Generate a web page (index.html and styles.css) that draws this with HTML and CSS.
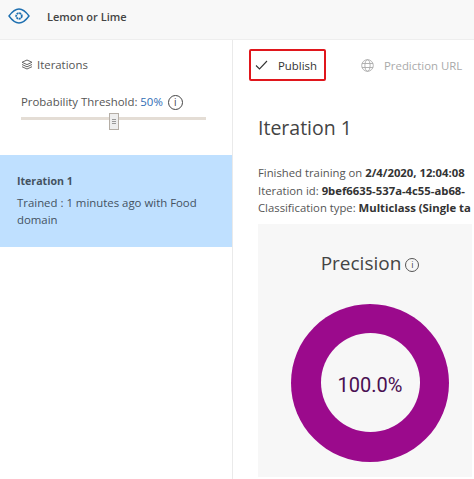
FILE: index.html
```html
<!DOCTYPE html>
<html lang="en">

<head>
    <meta charset="UTF-8">
    <meta name="viewport" content="width=device-width, initial-scale=1.0">
    <title>Lemon or Lime</title>
    <link rel="stylesheet" href="styles.css">
</head>

<body>
    <!-- top bar -->
    <div class="top-bar">
        <svg class="eye-icon" width="22" height="16" viewBox="0 0 22 16" fill="none" stroke="#1d6fb0">
            <path d="M1 8 C5 2.5 8 1 11 1 C14 1 17 2.5 21 8 C17 13.5 14 15 11 15 C8 15 5 13.5 1 8 Z" stroke-width="1.4" />
            <circle cx="11" cy="8" r="2.8" stroke-width="1.8" stroke-dasharray="2 0.6" />
        </svg>
        <span class="project-name">Lemon or Lime</span>
    </div>

    <div class="main">
        <!-- left panel -->
        <div class="side-panel">
            <div class="side-head">
                <div class="iterations-title">
                    <svg width="12" height="12" viewBox="0 0 12 12" fill="none" stroke="#666" stroke-width="1">
                        <path d="M6 1 L11 3.3 L6 5.6 L1 3.3 Z" />
                        <path d="M1 5.5 L6 7.8 L11 5.5" />
                        <path d="M1 7.7 L6 10 L11 7.7" />
                    </svg>
                    <span>Iterations</span>
                </div>
                <div class="threshold">
                    <span>Probability Threshold: <span class="threshold-value">50%</span></span>
                    <span class="info-icon">i</span>
                </div>
                <div class="slider">
                    <div class="slider-thumb">
                        <i></i><i></i><i></i>
                    </div>
                </div>
            </div>
            <div class="iteration-item">
                <div class="iteration-name">Iteration 1</div>
                <div class="iteration-desc">Trained : 1 minutes ago with Food domain</div>
            </div>
        </div>

        <!-- right content -->
        <div class="content">
            <div class="toolbar">
                <div class="tool-button publish">
                    <svg width="13" height="10" viewBox="0 0 13 10" fill="none" stroke="#333" stroke-width="1.1">
                        <path d="M1 5.5 L4.5 9 L12 1" />
                    </svg>
                    <span>Publish</span>
                </div>
                <div class="tool-button disabled">
                    <svg width="13" height="13" viewBox="0 0 13 13" fill="none" stroke="#aaa" stroke-width="0.9">
                        <circle cx="6.5" cy="6.5" r="5.8" />
                        <ellipse cx="6.5" cy="6.5" rx="2.6" ry="5.8" />
                        <path d="M1 4.5 H12 M1 8.5 H12" />
                    </svg>
                    <span>Prediction URL</span>
                </div>
            </div>

            <h1 class="iteration-title">Iteration 1</h1>

            <div class="details">
                <div>Finished training on <b>2/4/2020, 12:04:08</b></div>
                <div>Iteration id: <b>9bef6635-537a-4c55-ab68-</b></div>
                <div>Classification type: <b>Multiclass (Single ta</b></div>
            </div>

            <div class="metric-card">
                <div class="metric-title">
                    Precision
                    <span class="info-icon small">i</span>
                </div>
                <div class="donut">
                    <div class="donut-hole">100.0%</div>
                </div>
            </div>
        </div>
    </div>
</body>

</html>
```

FILE: styles.css
```css
* {
    box-sizing: border-box;
}

html,
body {
    height: 100%;
}

body {
    margin: 0;
    overflow: hidden;
    background-color: #fff;
    color: #444;
    font-family: "Open Sans", "Noto Sans", sans-serif;
    font-size: 11.4px;
    display: flex;
    flex-direction: column;
}

/* top bar */
.top-bar {
    height: 40px;
    flex-shrink: 0;
    background-color: #f8f8f8;
    border-bottom: 1px solid #eee;
    display: flex;
    align-items: center;
    padding: 0 0 7px 8px;
}

.eye-icon {
    margin-right: 17px;
}

.project-name {
    font-size: 11px;
    font-weight: 600;
    color: #444;
}

.main {
    flex-grow: 1;
    display: flex;
}

/* left panel */
.side-panel {
    width: 233px;
    flex-shrink: 0;
    border-right: 1px solid #eaeaea;
}

.side-head {
    height: 115px;
    padding: 17px 26px 0 21px;
}

.iterations-title {
    display: flex;
    align-items: center;
    gap: 4px;
    color: #555;
    line-height: 16px;
}

.threshold {
    margin-top: 21px;
    display: flex;
    align-items: center;
    gap: 3px;
    line-height: 16px;
    color: #555;
    white-space: nowrap;
}

.threshold-value {
    color: #2f6db5;
}

.info-icon {
    width: 15px;
    height: 15px;
    flex-shrink: 0;
    margin-left: 2px;
    border: 1.3px solid #444;
    border-radius: 50%;
    font-size: 10px;
    line-height: 12px;
    text-align: center;
    color: #444;
}

.info-icon.small {
    width: 14px;
    height: 14px;
    margin: 4px 0 0 0;
    border-color: #555;
    font-size: 9px;
    line-height: 11px;
}

.slider {
    position: relative;
    height: 3px;
    margin-top: 7px;
    background-color: #e4ddd5;
}

.slider-thumb {
    position: absolute;
    left: 88px;
    top: -4px;
    width: 10px;
    height: 17px;
    padding-top: 5px;
    background-color: #eee;
    border: 1px solid #b5aea6;
}

.slider-thumb i {
    display: block;
    width: 4px;
    height: 1px;
    margin: 0 auto 1px;
    background-color: #999;
}

.iteration-item {
    height: 92px;
    padding: 18px 17px 0;
    background-color: #bfe0ff;
    color: #44525f;
    line-height: 17px;
}

.iteration-name {
    font-size: 10.6px;
    font-weight: 700;
    margin-bottom: 4px;
}

/* right content */
.content {
    flex-grow: 1;
    min-width: 0;
    padding: 9px 2px 0 25px;
}

.toolbar {
    display: flex;
    align-items: center;
    gap: 35px;
    margin-left: -9px;
}

.tool-button {
    height: 32px;
    display: flex;
    align-items: center;
    gap: 10px;
    white-space: nowrap;
}

.publish {
    width: 77px;
    padding-left: 4px;
    border: 2px solid #e0161c;
    border-radius: 2px;
    color: #333;
}

.disabled {
    color: #aaa;
}

.iteration-title {
    margin: 33px 0 0;
    font-size: 19.5px;
    font-weight: 400;
    line-height: 28px;
    color: #444;
}

.details {
    margin-top: 22px;
    font-size: 11.3px;
    line-height: 17.5px;
    color: #555;
    white-space: nowrap;
}

.details b {
    color: #333;
}

.metric-card {
    height: 253px;
    margin-top: 7px;
    background-color: #f7f7f7;
    display: flex;
    flex-direction: column;
    align-items: center;
    padding: 25px 0 0 10px;
}

.metric-title {
    display: flex;
    align-items: center;
    gap: 4px;
    font-size: 19px;
    line-height: 28px;
    color: #444;
}

.donut {
    width: 158px;
    height: 158px;
    margin-top: 27px;
    border-radius: 50%;
    background-color: #9b0a8c;
    display: flex;
    align-items: center;
    justify-content: center;
}

.donut-hole {
    width: 99px;
    height: 99px;
    border-radius: 50%;
    background-color: #f7f7f7;
    display: flex;
    align-items: center;
    justify-content: center;
    padding-top: 4px;
    font-family: "Roboto", sans-serif;
    font-size: 20px;
    color: #4a0f52;
}
```
